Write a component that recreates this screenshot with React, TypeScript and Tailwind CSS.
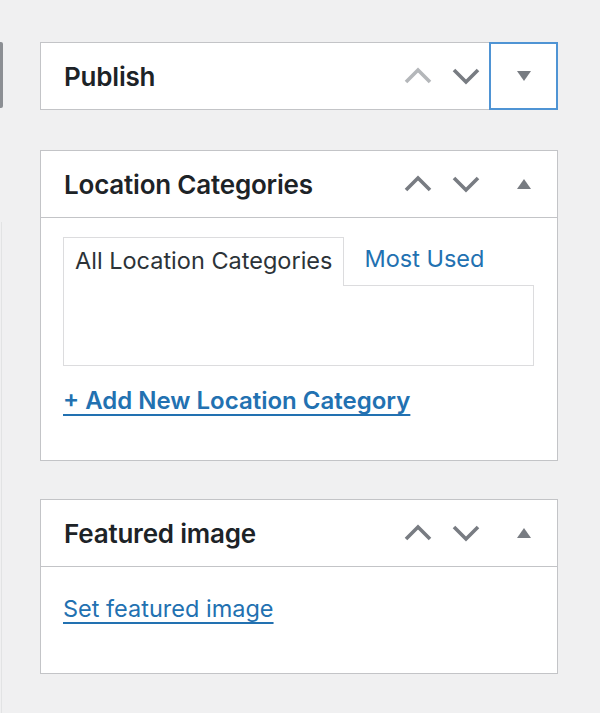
import React from "react";

const FONT = { fontFamily: 'Inter, "Noto Sans", "Liberation Sans", sans-serif' };

function Up({ disabled }: { disabled?: boolean }) {
  return (
    <svg width="30" height="18" viewBox="0 0 30 18" fill="none">
      <path d="M3 15 L15 3 L27 15" stroke={disabled ? "#b4b7ba" : "#787c82"} strokeWidth="3.6" strokeLinejoin="miter" />
    </svg>
  );
}
function Down() {
  return (
    <svg width="30" height="18" viewBox="0 0 30 18" fill="none">
      <path d="M3 3 L15 15 L27 3" stroke="#787c82" strokeWidth="3.6" strokeLinejoin="miter" />
    </svg>
  );
}
function Tri({ down }: { down?: boolean }) {
  return (
    <svg width="14" height="10" viewBox="0 0 14 10">
      {down ? <path d="M0 0 H14 L7 10 Z" fill="#787c82" /> : <path d="M0 10 H14 L7 0 Z" fill="#787c82" />}
    </svg>
  );
}

function Header({ title, collapsed, focused, upDisabled }: { title: string; collapsed?: boolean; focused?: boolean; upDisabled?: boolean }) {
  return (
    <div className="flex h-[66px] items-center">
      <h2 className="flex-1 pl-[23px] text-[26px] font-semibold tracking-[-0.2px] text-[#1d2327]">{title}</h2>
      <button className="flex h-full w-[48px] items-center justify-center">
        <Up disabled={upDisabled} />
      </button>
      <button className="flex h-full w-[48px] items-center justify-center">
        <Down />
      </button>
      <button
        className={
          focused
            ? "flex h-full w-[67px] items-center justify-center outline-2 outline-[#4f94d4] outline-solid -outline-offset-1"
            : "flex h-full w-[67px] items-center justify-center"
        }
      >
        <Tri down={collapsed} />
      </button>
    </div>
  );
}

export default function App() {
  return (
    <div className="flex h-[713px] w-[600px] bg-[#f0f0f1]" style={FONT}>
      <div className="flex w-[40px] flex-col">
        <div className="mt-[42px] h-[66px] w-[3px] rounded-r-[2px] bg-[#8c8f94]" />
        <div className="mt-[114px] w-[2px] flex-1 border-r border-[#e2e3e4]" />
      </div>
      <div className="flex w-[518px] flex-col">
        <div className="mt-[42px] border border-[#c3c4c7] bg-white">
          <Header title="Publish" collapsed focused upDisabled />
        </div>

        <div className="mt-[40px] border border-[#c3c4c7] bg-white">
          <div className="border-b border-[#c3c4c7]">
            <Header title="Location Categories" />
          </div>
          <div className="h-[242px] pl-[22px] pr-[23px] pt-[18px]">
            <div className="flex items-end">
              <div className="relative z-10 -mb-px flex h-[49px] items-center border border-b-0 border-[#dcdcde] bg-white px-[11px] pb-[3px] text-[23.5px] text-[#2c3338]">
                All Location Categories
              </div>
              <a href="#" className="ml-[20px] flex h-[49px] items-center pb-[3px] text-[23.5px] text-[#2271b1]">
                Most Used
              </a>
            </div>
            <div className="h-[81px] border border-[#dcdcde]" />
            <a href="#" className="mt-[19px] block text-[24px] font-semibold leading-[32px] text-[#2271b1] underline decoration-[2px] underline-offset-[5px]">
              + Add New Location Category
            </a>
          </div>
        </div>

        <div className="mt-[38px] border border-[#c3c4c7] bg-white">
          <div className="border-b border-[#c3c4c7]">
            <Header title="Featured image" />
          </div>
          <div className="h-[106px] pl-[22px] pt-[27px]">
            <a href="#" className="block text-[23.5px] leading-[30px] text-[#2271b1] underline decoration-[1.5px] underline-offset-[5px]">
              Set featured image
            </a>
          </div>
        </div>
      </div>
    </div>
  );
}
